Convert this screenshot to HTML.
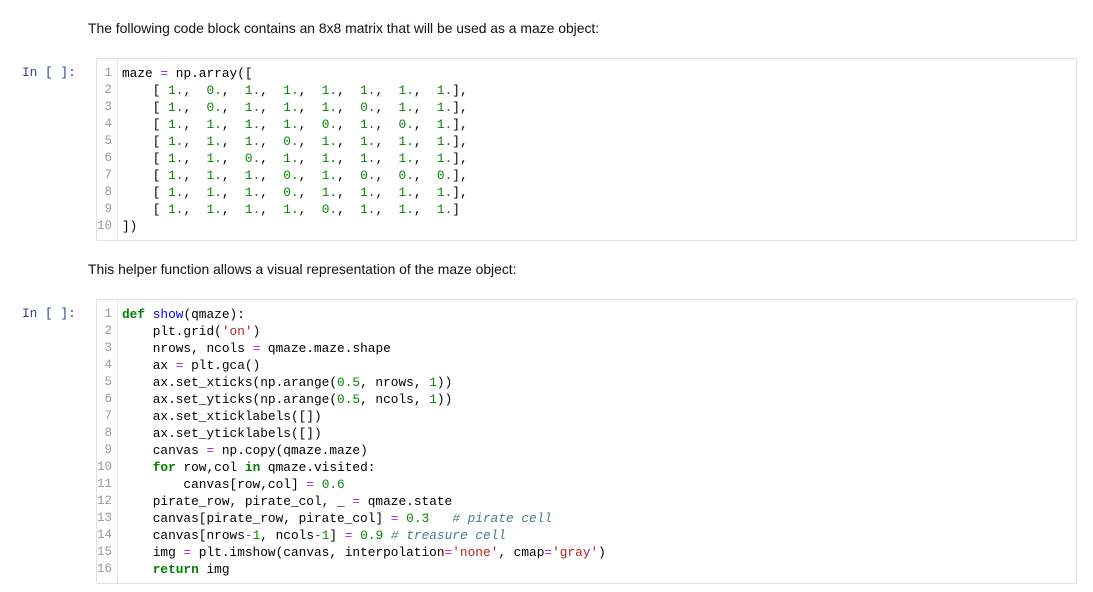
<!DOCTYPE html>
<html><head><meta charset="utf-8"><style>
body{margin:0;background:#fff;width:1093px;height:592px;overflow:hidden;position:relative;font-family:"Liberation Sans",Arial,sans-serif;}
.md{position:absolute;left:88px;font-size:13.9px;color:#111;}
.prompt{position:absolute;left:22px;font-family:"Liberation Mono",monospace;font-size:12.8px;color:#303F9F;}
.cell{position:absolute;left:96px;width:979px;border:1px solid #e0e0e0;border-radius:2px;background:#fff;}
.gut{position:absolute;left:0;top:0;bottom:0;width:20px;border-right:1px solid #e6e6e6;}
pre{margin:0;font-family:"Liberation Mono",monospace;font-size:12.8px;line-height:17px;}
.ln{position:absolute;left:0;width:15px;text-align:right;color:#999;top:6px;font-size:12.5px;}
.code{position:absolute;left:25px;top:6px;color:#000;}
.n{color:#080}.o{color:#AA22FF}.k{color:#008000;font-weight:bold}.f{color:#0000FF}.s{color:#BA2121}.c{color:#408080;font-style:italic}
</style></head><body>
<div class="md" style="top:20px">The following code block contains an 8x8 matrix that will be used as a maze object:</div>
<div class="prompt" style="top:65px">In [ ]:</div>
<div class="cell" style="top:58px;height:181px">
<div class="gut"></div>
<pre class="ln">1
2
3
4
5
6
7
8
9
10</pre>
<pre class="code">maze <span class="o">=</span> np.array([
    [ <span class="n">1.</span>,  <span class="n">0.</span>,  <span class="n">1.</span>,  <span class="n">1.</span>,  <span class="n">1.</span>,  <span class="n">1.</span>,  <span class="n">1.</span>,  <span class="n">1.</span>],
    [ <span class="n">1.</span>,  <span class="n">0.</span>,  <span class="n">1.</span>,  <span class="n">1.</span>,  <span class="n">1.</span>,  <span class="n">0.</span>,  <span class="n">1.</span>,  <span class="n">1.</span>],
    [ <span class="n">1.</span>,  <span class="n">1.</span>,  <span class="n">1.</span>,  <span class="n">1.</span>,  <span class="n">0.</span>,  <span class="n">1.</span>,  <span class="n">0.</span>,  <span class="n">1.</span>],
    [ <span class="n">1.</span>,  <span class="n">1.</span>,  <span class="n">1.</span>,  <span class="n">0.</span>,  <span class="n">1.</span>,  <span class="n">1.</span>,  <span class="n">1.</span>,  <span class="n">1.</span>],
    [ <span class="n">1.</span>,  <span class="n">1.</span>,  <span class="n">0.</span>,  <span class="n">1.</span>,  <span class="n">1.</span>,  <span class="n">1.</span>,  <span class="n">1.</span>,  <span class="n">1.</span>],
    [ <span class="n">1.</span>,  <span class="n">1.</span>,  <span class="n">1.</span>,  <span class="n">0.</span>,  <span class="n">1.</span>,  <span class="n">0.</span>,  <span class="n">0.</span>,  <span class="n">0.</span>],
    [ <span class="n">1.</span>,  <span class="n">1.</span>,  <span class="n">1.</span>,  <span class="n">0.</span>,  <span class="n">1.</span>,  <span class="n">1.</span>,  <span class="n">1.</span>,  <span class="n">1.</span>],
    [ <span class="n">1.</span>,  <span class="n">1.</span>,  <span class="n">1.</span>,  <span class="n">1.</span>,  <span class="n">0.</span>,  <span class="n">1.</span>,  <span class="n">1.</span>,  <span class="n">1.</span>]
])</pre>
</div>
<div class="md" style="top:261px">This helper function allows a visual representation of the maze object:</div>
<div class="prompt" style="top:306px">In [ ]:</div>
<div class="cell" style="top:299px;height:283px">
<div class="gut"></div>
<pre class="ln">1
2
3
4
5
6
7
8
9
10
11
12
13
14
15
16</pre>
<pre class="code"><span class="k">def</span> <span class="f">show</span>(qmaze):
    plt.grid(<span class="s">'on'</span>)
    nrows, ncols <span class="o">=</span> qmaze.maze.shape
    ax <span class="o">=</span> plt.gca()
    ax.set_xticks(np.arange(<span class="n">0.5</span>, nrows, <span class="n">1</span>))
    ax.set_yticks(np.arange(<span class="n">0.5</span>, ncols, <span class="n">1</span>))
    ax.set_xticklabels([])
    ax.set_yticklabels([])
    canvas <span class="o">=</span> np.copy(qmaze.maze)
    <span class="k">for</span> row,col <span class="k">in</span> qmaze.visited:
        canvas[row,col] <span class="o">=</span> <span class="n">0.6</span>
    pirate_row, pirate_col, _ <span class="o">=</span> qmaze.state
    canvas[pirate_row, pirate_col] <span class="o">=</span> <span class="n">0.3</span>   <span class="c"># pirate cell</span>
    canvas[nrows<span class="o">-</span><span class="n">1</span>, ncols<span class="o">-</span><span class="n">1</span>] <span class="o">=</span> <span class="n">0.9</span> <span class="c"># treasure cell</span>
    img <span class="o">=</span> plt.imshow(canvas, interpolation<span class="o">=</span><span class="s">'none'</span>, cmap<span class="o">=</span><span class="s">'gray'</span>)
    <span class="k">return</span> img</pre>
</div>
</body></html>
